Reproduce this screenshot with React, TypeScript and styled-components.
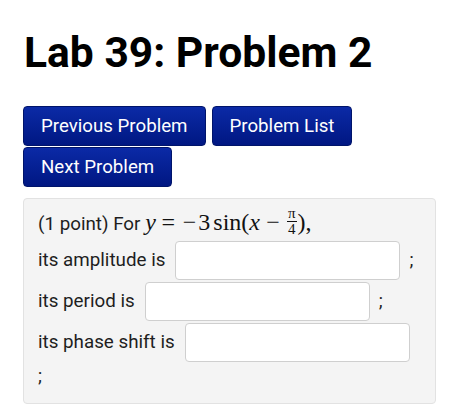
import React from "react";
import styled, { createGlobalStyle } from "styled-components";

const Global = createGlobalStyle`
  html, body { margin: 0; padding: 0; background: #ffffff; }
  body { font-family: Roboto, "Liberation Sans", Arial, sans-serif; color: #1e1e1e; }
`;

const Page = styled.div`
  padding: 27px 38px 0 23px;
  width: 474px;
  box-sizing: border-box;
`;

const Title = styled.h1`
  margin: 0 0 29px 1px;
  font-family: Roboto, "Liberation Sans", sans-serif;
  font-weight: 700;
  font-size: 42.6px;
  line-height: 50px;
  color: #000;
`;

const ButtonBar = styled.div`
  display: flex;
  flex-wrap: wrap;
  column-gap: 6px;
  row-gap: 1px;
`;

const NavButton = styled.button`
  font-family: Roboto, "Liberation Sans", sans-serif;
  font-size: 18.7px;
  line-height: 20px;
  padding: 9px 17px;
  color: #ffffff;
  background: linear-gradient(#0b2aa6, #001782);
  border: 1px solid #00146a;
  border-radius: 4px;
  cursor: pointer;
`;

const Panel = styled.div`
  margin-top: 11px;
  background: #f4f4f4;
  border: 1px solid #e2e2e2;
  border-radius: 4px;
  padding: 8px 14px 14px 14px;
  font-size: 18.8px;
  color: #1e1e1e;
`;

const Statement = styled.div`
  line-height: 32px;
  height: 32px;
`;

const Math = styled.span`
  font-family: "Liberation Serif", "Times New Roman", serif;
  font-size: 24px;
  line-height: 1;
  color: #111;
  white-space: nowrap;
`;

const Var = styled.i`
  font-style: italic;
`;

const Op = styled.span<{ $w?: number }>`
  display: inline-block;
  width: ${(p) => (p.$w ? `${p.$w}px` : "auto")};
  text-align: center;
`;

const Gap = styled.span<{ $w: number }>`
  display: inline-block;
  width: ${(p) => p.$w}px;
`;

const Frac = styled.span`
  display: inline-block;
  vertical-align: -4px;
  text-align: center;
  font-size: 15px;
  line-height: 12px;
  margin: 0 1px 0 1px;
`;

const Num = styled.span`
  display: block;
  padding: 0 1px 2px;
  border-bottom: 1px solid #111;
`;

const Den = styled.span`
  display: block;
  padding-top: 1px;
`;

const Row = styled.div`
  display: flex;
  align-items: center;
  height: 40px;
  margin-top: 1px;
`;

const Label = styled.span`
  white-space: nowrap;
`;

const Answer = styled.input`
  box-sizing: border-box;
  width: 225px;
  height: 39px;
  margin: 0 9px 0 10px;
  background: #ffffff;
  border: 1px solid #cfcfcf;
  border-radius: 4px;
  font-size: 18px;
  padding: 0 8px;
`;

const Tail = styled.div`
  line-height: 26px;
  margin-top: 1px;
`;

export default function App() {
  return (
    <Page>
      <Global />
      <Title>Lab 39: Problem 2</Title>
      <ButtonBar>
        <NavButton>Previous Problem</NavButton>
        <NavButton>Problem List</NavButton>
        <NavButton>Next Problem</NavButton>
      </ButtonBar>
      <Panel>
        <Statement>
          (1 point) For{" "}
          <Math>
            <Var>y</Var>
            <Op $w={25}>=</Op>
            <Gap $w={2} />
            −<Gap $w={2} />3<Gap $w={3} />sin(<Var>x</Var>
            <Op $w={26}>−</Op>
            <Frac>
              <Num>π</Num>
              <Den>4</Den>
            </Frac>
            ),
          </Math>
        </Statement>
        <Row>
          <Label>its amplitude is</Label>
          <Answer type="text" />
          <Label>;</Label>
        </Row>
        <Row>
          <Label>its period is</Label>
          <Answer type="text" />
          <Label>;</Label>
        </Row>
        <Row>
          <Label>its phase shift is</Label>
          <Answer type="text" />
        </Row>
        <Tail>;</Tail>
      </Panel>
    </Page>
  );
}
